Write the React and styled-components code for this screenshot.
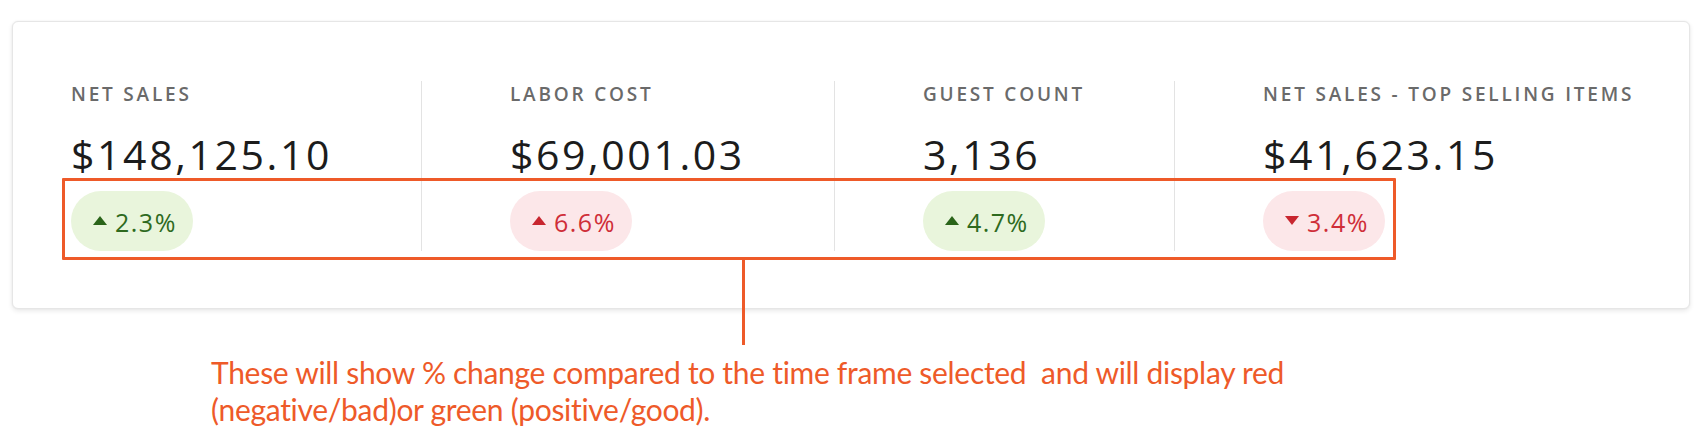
import React from 'react';
import styled, { createGlobalStyle } from 'styled-components';

const GlobalStyle = createGlobalStyle`
  html, body { margin: 0; padding: 0; background: #ffffff; }
  body { font-family: "Open Sans", "Noto Sans", sans-serif; }
`;

const ACCENT = '#EE5A29';

const Page = styled.div`
  position: relative;
  width: 1700px;
  height: 444px;
  box-sizing: border-box;
  padding: 21px 10px 0 12px;
  overflow: hidden;
`;

const Card = styled.section`
  display: flex;
  align-items: stretch;
  box-sizing: border-box;
  height: 288px;
  padding: 59px 0 57px 58px;
  background: #ffffff;
  border: 1px solid #e6e6e6;
  border-radius: 6px;
  box-shadow: 0 2px 5px rgba(0, 0, 0, 0.09), 0 0 2px rgba(0, 0, 0, 0.05);
`;

const Metric = styled.div`
  display: flex;
  flex-direction: column;
  align-items: flex-start;
  padding: 0 89px 0 88px;
  border-left: 1px solid #e3e3e3;

  &:first-child {
    padding-left: 0;
    border-left: none;
  }
`;

const Label = styled.div`
  font-family: "Open Sans", sans-serif;
  font-size: 19px;
  font-weight: 600;
  line-height: 26px;
  letter-spacing: 2.8px;
  color: #6a6a6a;
  white-space: nowrap;
`;

const Value = styled.div`
  margin-top: 23px;
  font-family: "Open Sans", sans-serif;
  font-size: 41px;
  font-weight: 400;
  line-height: 48px;
  letter-spacing: 2.6px;
  color: #1c1c1c;
  white-space: nowrap;
`;

const Badge = styled.div`
  margin-top: 13px;
  display: inline-flex;
  align-items: center;
  gap: 8px;
  box-sizing: border-box;
  height: 60px;
  padding: 2px 16px 0 22px;
  border-radius: 30px;
  background: ${(p) => (p.$tone === 'good' ? '#E9F5DC' : '#FCE7E9')};
  color: ${(p) => (p.$tone === 'good' ? '#2E6A1E' : '#CF2E38')};
  font-family: "Open Sans", sans-serif;
  font-size: 25px;
  line-height: 32px;
  letter-spacing: 1.5px;
`;

const Arrow = styled.svg`
  flex: none;
  width: 14px;
  height: 9px;
  margin-top: -4px;
  fill: ${(p) => (p.$tone === 'good' ? '#2A6419' : '#C8262F')};
`;

const Highlight = styled.div`
  position: absolute;
  left: 62px;
  top: 178px;
  width: 1334px;
  height: 82px;
  box-sizing: border-box;
  border: 3px solid ${ACCENT};
  border-radius: 1px;
  pointer-events: none;
`;

const Stem = styled.div`
  position: absolute;
  left: 742px;
  top: 259px;
  width: 3px;
  height: 86px;
  background: ${ACCENT};
`;

const Note = styled.p`
  margin: 45px 0 0;
  padding-left: 199px;
  font-family: Lato, "Open Sans", sans-serif;
  font-size: 30px;
  font-weight: 400;
  line-height: 37px;
  letter-spacing: -0.3px;
  color: ${ACCENT};
  white-space: pre-wrap;
`;

const metrics = [
  { label: 'NET SALES', value: '$148,125.10', change: '2.3%', dir: 'up', tone: 'good' },
  { label: 'LABOR COST', value: '$69,001.03', change: '6.6%', dir: 'up', tone: 'bad' },
  { label: 'GUEST COUNT', value: '3,136', change: '4.7%', dir: 'up', tone: 'good' },
  { label: 'NET SALES - TOP SELLING ITEMS', value: '$41,623.15', change: '3.4%', dir: 'down', tone: 'bad' },
];

function Triangle({ dir, tone }) {
  return (
    <Arrow $tone={tone} viewBox="0 0 14 9" aria-hidden="true">
      {dir === 'up' ? <polygon points="7,0 14,9 0,9" /> : <polygon points="0,0 14,0 7,9" />}
    </Arrow>
  );
}

export default function App() {
  return (
    <>
      <GlobalStyle />
      <Page>
        <Card>
          {metrics.map((m) => (
            <Metric key={m.label}>
              <Label>{m.label}</Label>
              <Value>{m.value}</Value>
              <Badge $tone={m.tone}>
                <Triangle dir={m.dir} tone={m.tone} />
                <span>{m.change}</span>
              </Badge>
            </Metric>
          ))}
        </Card>
        <Note>
          {'These will show % change compared to the time frame selected  and will display red\n(negative/bad)or green (positive/good).'}
        </Note>
        <Highlight />
        <Stem />
      </Page>
    </>
  );
}
